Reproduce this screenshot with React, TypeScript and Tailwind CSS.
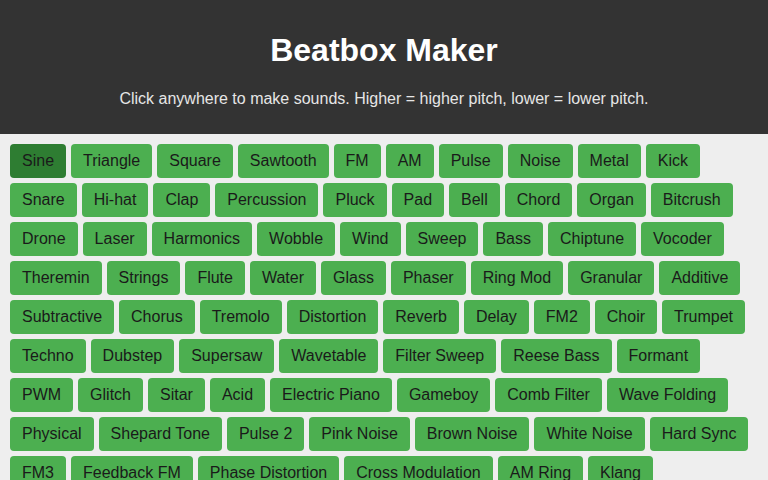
import React from "react";

const SOUNDS = [
  "Sine","Triangle","Square","Sawtooth","FM","AM","Pulse","Noise","Metal","Kick",
  "Snare","Hi-hat","Clap","Percussion","Pluck","Pad","Bell","Chord","Organ","Bitcrush",
  "Drone","Laser","Harmonics","Wobble","Wind","Sweep","Bass","Chiptune","Vocoder",
  "Theremin","Strings","Flute","Water","Glass","Phaser","Ring Mod","Granular","Additive",
  "Subtractive","Chorus","Tremolo","Distortion","Reverb","Delay","FM2","Choir","Trumpet",
  "Techno","Dubstep","Supersaw","Wavetable","Filter Sweep","Reese Bass","Formant",
  "PWM","Glitch","Sitar","Acid","Electric Piano","Gameboy","Comb Filter","Wave Folding",
  "Physical","Shepard Tone","Pulse 2","Pink Noise","Brown Noise","White Noise","Hard Sync",
  "FM3","Feedback FM","Phase Distortion","Cross Modulation","AM Ring","Klang",
];

export default function App() {
  return (
    <div className="min-h-screen bg-[#eeeeee]" style={{ fontFamily: '"Liberation Sans", Arial, sans-serif' }}>
      <header className="h-[134px] bg-[#333333] flex flex-col items-center pt-[32px]">
        <h1 className="text-[32px] leading-[36px] font-bold text-white">Beatbox Maker</h1>
        <p className="mt-[19px] text-[16px] leading-[24px] text-[#e6e6e6]">
          Click anywhere to make sounds. Higher = higher pitch, lower = lower pitch.
        </p>
      </header>
      <div className="flex flex-wrap gap-[5px] p-[10px]">
        {SOUNDS.map((s, i) => (
          <button
            key={s}
            className={
              "h-[34px] px-[12px] rounded-[4px] text-[16px] leading-[18px] text-[#1a1a1a] " +
              (i === 0 ? "bg-[#2e7d32]" : "bg-[#4caf50]")
            }
          >
            {s}
          </button>
        ))}
      </div>
    </div>
  );
}
